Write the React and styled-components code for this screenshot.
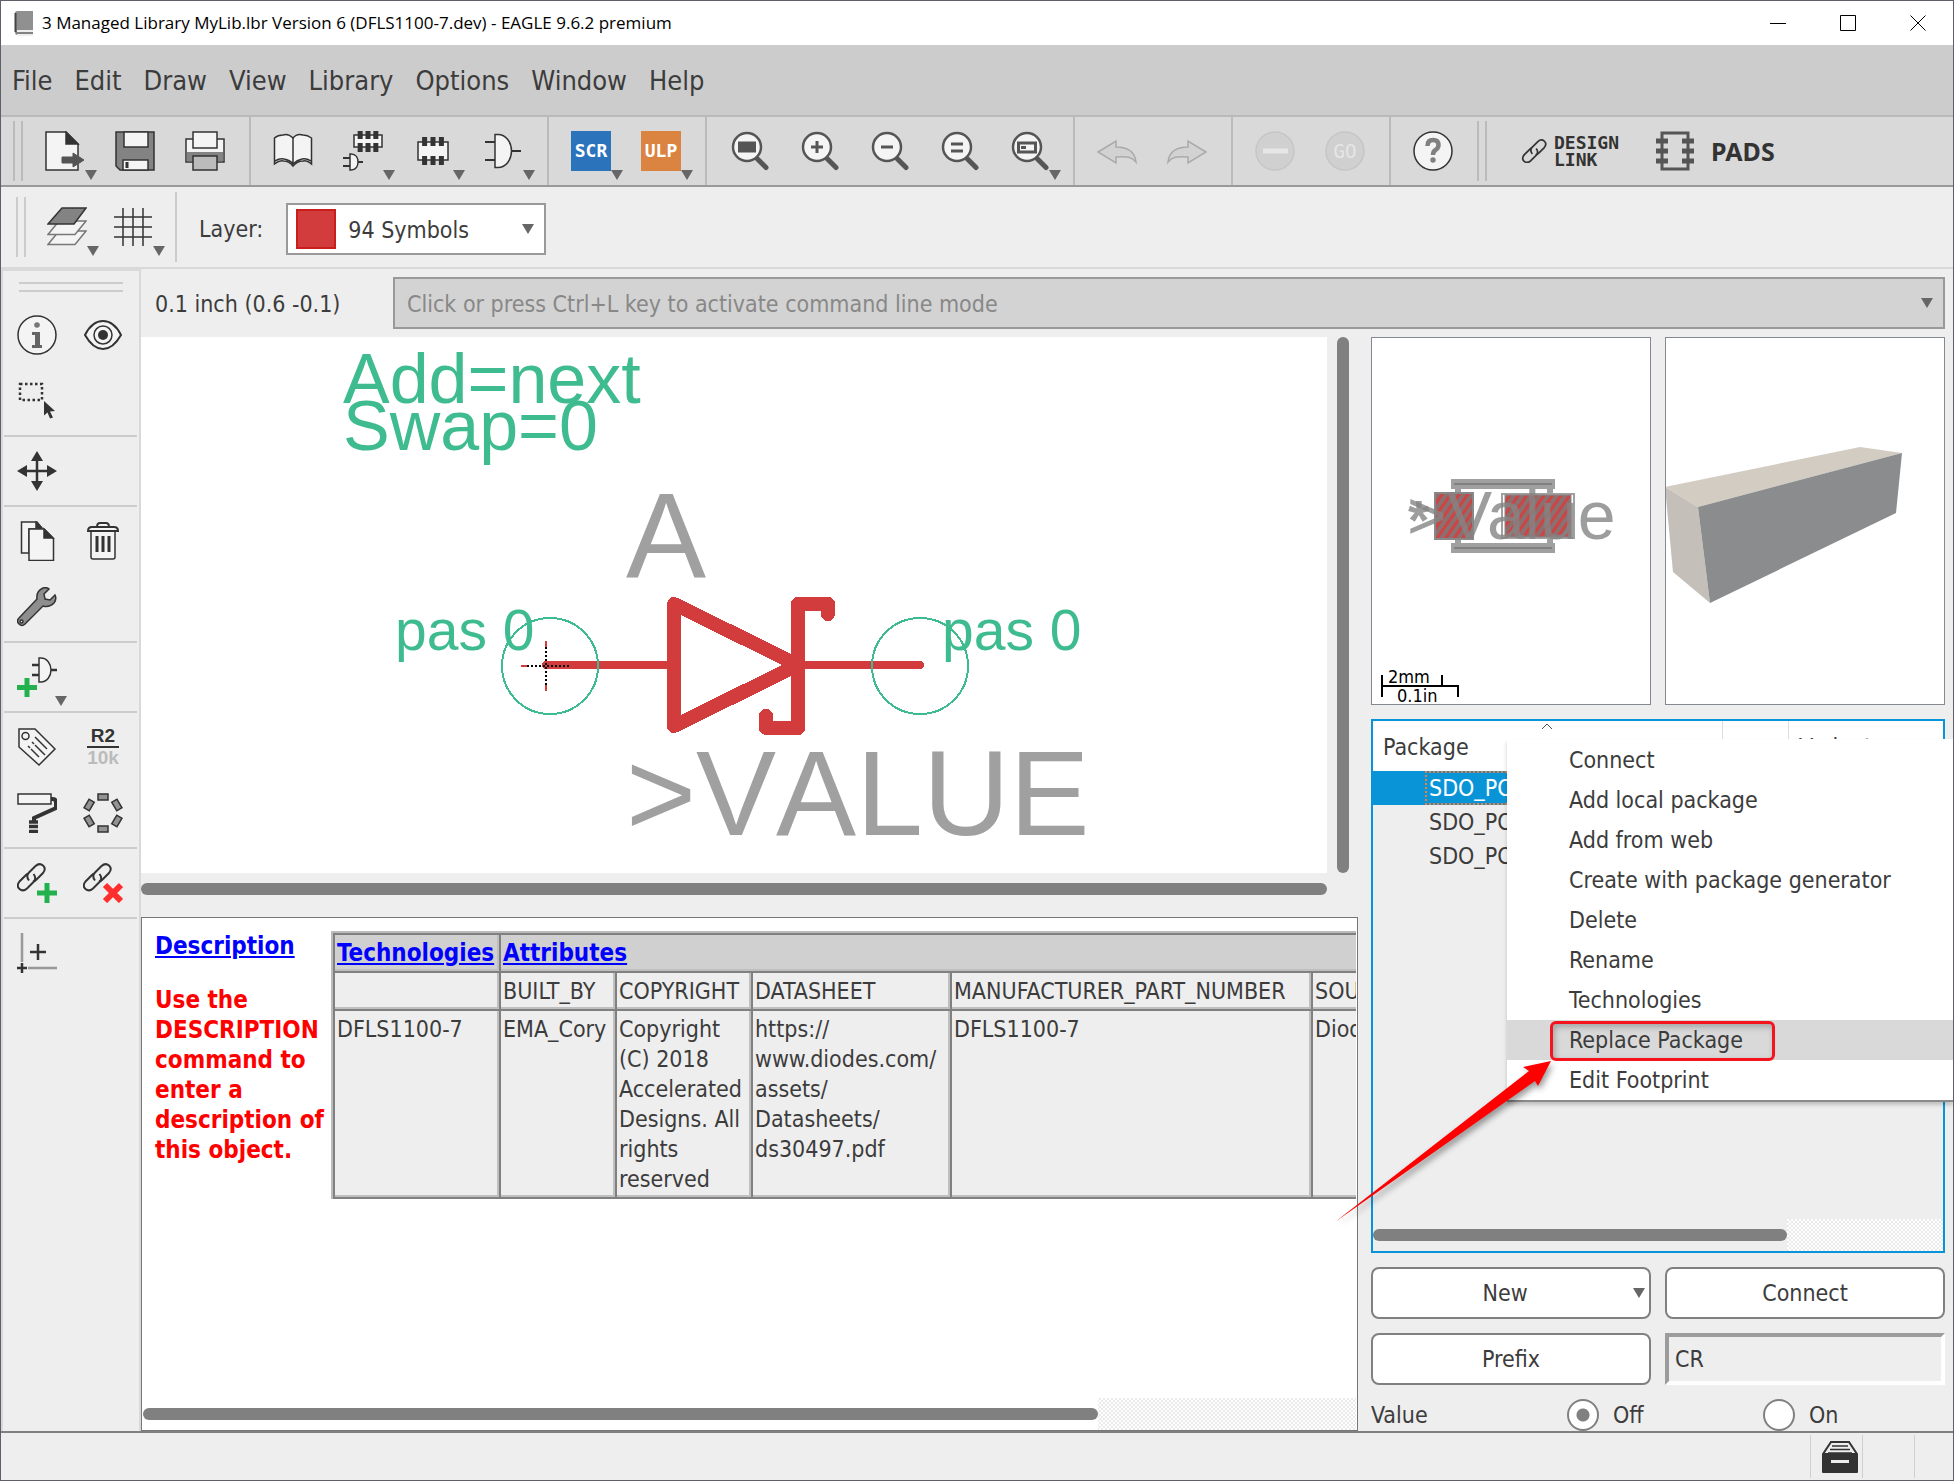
import React, { useState } from "react";
import styled, { createGlobalStyle, css } from "styled-components";

const GlobalStyle = createGlobalStyle`
  *, *::before, *::after { box-sizing: border-box; }
  body { margin: 0; background: #eeeeee; }
  button, input, select { font: inherit; color: inherit; }
`;

const ink = "#333333";
const line = "#808080";
const paper = "#f4f4f4";

/* ---------- shared parts ---------- */

const Caret = styled.span`
  display: block;
  width: 0;
  height: 0;
  border-left: 6px solid transparent;
  border-right: 6px solid transparent;
  border-top: 10px solid #666666;
`;

const Thumb = styled.div`
  background: ${line};
  border-radius: 6px;
  ${(p) => (p.$vertical ? "width: 12px; height: 100%;" : "height: 12px; width: 100%;")}
`;

const hatch = css`
  background: repeating-conic-gradient(#ffffff 0 25%, #eaeaea 0 50%) 0 0 / 4px 4px;
`;

/* ---------- window frame ---------- */

const Window = styled.div`
  font-family: "DejaVu Sans Condensed", "DejaVu Sans", "Noto Sans", sans-serif;
  font-size: 23px;
  line-height: 30px;
  color: #3c3c3c;
  background: #eeeeee;
  min-height: 100vh;
  min-width: 1200px;
  border: 1px solid #5d606b;
  display: flex;
  flex-direction: column;
  overflow: hidden;
`;

const TitleBar = styled.header`
  height: 44px;
  background: #ffffff;
  color: #000000;
  display: flex;
  align-items: center;
  padding-left: 13px;
  gap: 8px;
  font-family: "Open Sans", "Noto Sans", sans-serif;
  font-size: 17px;
`;

const TitleText = styled.h1`
  font: inherit;
  margin: 0;
  flex: 1;
`;

const WindowControls = styled.div`
  display: flex;
`;

const WindowButton = styled.button`
  width: 70px;
  height: 44px;
  border: 0;
  padding: 0;
  background: transparent;
  display: grid;
  place-items: center;
`;

const MenuBar = styled.nav`
  height: 72px;
  background: #cccccc;
  border-bottom: 2px solid #b9b9b9;
  display: flex;
  align-items: center;
  padding-top: 2px;
  font-size: 27px;
`;

const MenuItem = styled.button`
  border: 0;
  background: transparent;
  padding: 0 11px;
`;

/* ---------- toolbars ---------- */

const MainToolbar = styled.div`
  height: 70px;
  background: #d9d9d9;
  border-bottom: 2px solid #999999;
  display: flex;
  align-items: center;
  padding-left: 12px;
`;

const Grip = styled.div`
  width: 10px;
  height: 60px;
  border: solid ${(p) => p.$tone || "#bbbbbb"};
  border-width: 0 2px;
`;

const ToolGroup = styled.div`
  display: flex;
  align-self: stretch;
  align-items: center;
  padding: 0 9px 0 7px;
  border-right: ${(p) => (p.$last ? "0" : "2px solid #bbbbbb")};
`;

const ToolButton = styled.button`
  position: relative;
  width: ${(p) => p.$width || 70}px;
  height: 66px;
  border: 0;
  padding: 0;
  background: transparent;
  display: grid;
  place-items: center;

  ${Caret} {
    position: absolute;
    right: ${(p) => p.$caretRight || 3}px;
    bottom: 4px;
  }
`;

const Badge = styled.span`
  width: 40px;
  height: 40px;
  display: grid;
  place-items: center;
  background: ${(p) => p.$color};
  color: #ffffff;
  font: bold 18px/20px "DejaVu Sans Mono", monospace;
`;

const LinkButton = styled.button`
  border: 0;
  padding: 0;
  background: transparent;
  display: flex;
  align-items: center;
  gap: ${(p) => p.$gap}px;
  margin-left: ${(p) => p.$indent}px;
  text-align: left;
  color: #333333;
  font: ${(p) => (p.$large ? 'bold 25px/30px "Noto Sans", sans-serif' : 'bold 18px/17px "DejaVu Sans Mono", monospace')};
`;

const LayerToolbar = styled.div`
  height: 82px;
  border-bottom: 2px solid #d9d9d9;
  display: flex;
  align-items: center;
  padding-left: 15px;
`;

const LayerGroup = styled.div`
  display: flex;
  align-items: center;
  height: 70px;
  padding: 0 9px 0 8px;
  border-right: 2px solid #cccccc;
`;

const LayerField = styled.div`
  display: flex;
  align-items: center;
  gap: 23px;
  padding: 4px 0 0 22px;
`;

const LayerPicker = styled.div`
  width: 260px;
  height: 52px;
  border: 2px solid #999999;
  background: #ffffff;
  display: flex;
  align-items: center;
  padding: 0 10px 0 8px;
  gap: 12px;
`;

const Swatch = styled.span`
  width: 40px;
  height: 40px;
  background: #d23c3c;
  border: 2px solid #c81e1e;
`;

const LayerSelect = styled.select`
  appearance: none;
  border: 0;
  background: transparent;
  flex: 1;
  min-width: 0;
  padding: 2px 0 0;
  outline: 0;
`;

/* ---------- body ---------- */

const Body = styled.div`
  flex: 1;
  display: flex;
`;

const Palette = styled.aside`
  width: 140px;
  border: 2px solid #d9d9d9;
  border-bottom: 0;
  padding-top: 11px;
`;

const PaletteGrip = styled.div`
  height: 10px;
  margin: 0 16px 9px 16px;
  border: solid #cccccc;
  border-width: 2px 0;
`;

const PaletteGroup = styled.div`
  display: grid;
  grid-template-columns: 66px 66px;
  padding: 1px 0;
  margin: 0 2px 0 1px;
  border-top: ${(p) => (p.$first ? "0" : "2px solid #cccccc")};
`;

const ValueGlyph = styled.span`
  display: grid;
  font: bold 19px/20px "Liberation Sans", Arial, sans-serif;
  color: ${ink};

  b + b {
    color: #bbbbbb;
    border-top: 2px solid ${ink};
  }
`;

const Work = styled.main`
  flex: 1;
  min-width: 0;
  display: flex;
  flex-direction: column;
`;

const CommandRow = styled.div`
  height: 68px;
  display: flex;
  align-items: center;
  padding: 0 8px 0 14px;
`;

const Position = styled.output`
  width: 238px;
  padding-top: 2px;
  white-space: nowrap;
`;

const CommandBox = styled.div`
  flex: 1;
  height: 52px;
  border: 2px solid #999999;
  background: #d3d3d3;
  display: flex;
  align-items: center;
  padding: 0 10px 0 12px;
`;

const CommandInput = styled.input`
  flex: 1;
  min-width: 0;
  border: 0;
  padding: 2px 0 0;
  outline: 0;
  background: transparent;

  &::placeholder { color: #888888; opacity: 1; }
`;

const Panels = styled.div`
  flex: 1;
  display: grid;
  grid-template-columns: minmax(0, 1fr) 574px;
  gap: 13px;
  padding-right: 8px;
`;

const Editor = styled.section`
  display: flex;
  flex-direction: column;
  min-width: 0;
`;

const CanvasGrid = styled.div`
  display: grid;
  grid-template-columns: minmax(0, 1fr) 31px;
  margin-bottom: 12px;
`;

const Canvas = styled.div`
  height: 536px;
  background: #ffffff;
  overflow: hidden;
`;

const SymbolSvg = styled.svg`
  display: block;
  font-family: "Liberation Sans", Arial, sans-serif;
  font-kerning: none;
`;

const Track = styled.div`
  padding: ${(p) => (p.$vertical ? "0 10px" : "10px 0")};
`;

const Info = styled.section`
  flex: 1;
  background: #ffffff;
  border: 1px solid #777777;
  padding: 0 1px;
  display: flex;
  flex-direction: column;
`;

const InfoContent = styled.div`
  flex: 1;
  display: flex;
  padding: 13px 0 0 12px;
  overflow: hidden;
`;

const Summary = styled.div`
  flex: none;
  width: 176px;
  font-size: 24px;
  font-weight: bold;
`;

const DocLink = styled.a`
  color: #0000ff;
  font-size: 24px;
  font-weight: bold;
`;

const Warning = styled.p`
  margin: 24px 0 0;
  color: #ff0000;
`;

const AttributeTable = styled.table`
  flex: none;
  table-layout: fixed;
  width: 1099px;
  align-self: flex-start;
  border-collapse: separate;
  border-spacing: 0;
  border: solid #bbbbbb;
  border-width: 2px 0 0 2px;
`;

const Cell = styled.td`
  padding: 3px 2px;
  height: 38px;
  text-align: left;
  vertical-align: top;
  font-weight: ${(p) => (p.$head ? "bold" : "normal")};
  background: ${(p) => (p.$head ? "#d0d0d0" : "#eeeeee")};
  border: solid ${line};
  border-width: ${(p) => (p.$bottom ? "2px 0 2px 2px" : "2px 0 0 2px")};
  box-shadow: inset -2px -2px #bfbfbf;
`;

const InfoTrack = styled.div`
  height: 32px;
  display: flex;
  ${hatch}
`;

const ListTrack = styled(InfoTrack)`
  margin-top: auto;
`;

const TrackFill = styled.div`
  width: ${(p) => p.$size};
  background: ${(p) => p.$tone};
  display: flex;
  align-items: center;
`;

/* ---------- right side ---------- */

const Side = styled.section`
  display: flex;
  flex-direction: column;
  gap: 14px;
`;

const Pair = styled.div`
  display: grid;
  grid-template-columns: 1fr 1fr;
  gap: 14px;
`;

const Preview = styled.div`
  height: 368px;
  background: #ffffff;
  border: 1px solid #858992;
  overflow: hidden;
`;

const PackageBox = styled.div`
  position: relative;
  flex: 1;
  border: 2px solid #0a94d8;
  display: flex;
  flex-direction: column;
`;

const PackageHeader = styled.div`
  position: relative;
  height: 50px;
  background: #ffffff;
  display: grid;
  grid-template-columns: 350px 66px 1fr;
`;

const HeaderCell = styled.div`
  padding: 11px 10px 0;
  border-right: ${(p) => (p.$last ? "0" : "1px solid #dddddd")};
`;

const SortMark = styled.svg`
  position: absolute;
  left: 168px;
  top: 2px;
`;

const Packages = styled.ul`
  list-style: none;
  margin: 0;
  padding: 0;
`;

const PackageRow = styled.li`
  height: 34px;
  padding-left: 52px;
  background: ${(p) => (p.$selected ? "#0a94d8" : "transparent")};
  color: ${(p) => (p.$selected ? "#ffffff" : "inherit")};
`;

const RowText = styled.span`
  display: block;
  height: 34px;
  line-height: 30px;
  padding-left: 2px;
  border: 2px dotted ${(p) => (p.$selected ? "#ff7a30" : "transparent")};
`;

const ContextMenu = styled.div`
  position: absolute;
  left: 134px;
  right: -10px;
  top: 18px;
  padding-top: 1px;
  background: #ffffff;
  border-bottom: 2px solid #8a8a8a;
  box-shadow: 0 3px 4px rgba(0, 0, 0, 0.2);
`;

const ContextItem = styled.button`
  position: relative;
  display: block;
  width: 100%;
  height: 40px;
  border: 0;
  padding: 0 0 0 62px;
  text-align: left;
  background: ${(p) => (p.$active ? "#d9d9d9" : "transparent")};
`;

const Callout = styled.span`
  position: absolute;
  left: 43px;
  top: 1px;
  width: 225px;
  height: 40px;
  border: 3px solid #f5141e;
  border-radius: 6px;
  box-shadow: inset 2px 3px 6px rgba(0, 0, 0, 0.25);
`;

const CalloutArrow = styled.svg`
  position: absolute;
  left: -174px;
  top: 37px;
  overflow: visible;
  pointer-events: none;
  filter: drop-shadow(2px 4px 3px rgba(0, 0, 0, 0.4));
`;

const PushButton = styled.button`
  height: 52px;
  border: 2px solid ${line};
  border-radius: 8px;
  background: #ffffff;
  padding: 0 4px;
  display: flex;
  align-items: center;
`;

const PushText = styled.span`
  flex: 1;
  text-align: center;
`;

const PrefixInput = styled.input`
  width: 100%;
  min-width: 0;
  height: 52px;
  border: 4px solid;
  border-color: #9c9c9c #ffffff #ffffff #9c9c9c;
  background: #eeeeee;
  padding: 0 6px;
  outline: 0;
`;

const ValueRow = styled.fieldset`
  border: 0;
  margin: 0;
  padding: 0;
  display: grid;
  grid-template-columns: 196px 196px 1fr;
  align-items: center;
  height: 32px;
`;

const Choice = styled.label`
  display: flex;
  align-items: center;
  gap: 14px;
`;

const Radio = styled.input`
  appearance: none;
  width: 32px;
  height: 32px;
  margin: 0;
  border: 2px solid ${line};
  border-radius: 50%;
  background: #ffffff;

  &:checked { background: radial-gradient(circle, ${line} 0 6px, #ffffff 7px); }
`;

/* ---------- status bar ---------- */

const StatusBar = styled.footer`
  height: 49px;
  border-top: 2px solid ${line};
  display: flex;
  justify-content: flex-end;
  padding: 2px 0;
`;

const StatusCell = styled.div`
  width: ${(p) => p.$width}px;
  border-left: 1px solid #cfcfcf;
  display: flex;
  align-items: center;
  padding-left: 11px;
`;

/* ---------- icons ---------- */

const Icon = ({ children, size = 40 }) => (
  <svg width={size} height={size} viewBox="0 0 40 40" fill={paper} stroke={ink} strokeWidth="1.5" aria-hidden="true">
    {children}
  </svg>
);

const gateShape = <path d="M12 3.500h3c8 0 13.500 8 13.500 16.500S23 36.500 15 36.500h-3z" />;

const Chip = ({ x = 5, y = 11, w = 30, h = 18 }) => (
  <g>
    <rect x={x} y={y} width={w} height={h} />
    {[0.22, 0.5, 0.78].map((f) => (
      <path key={f} d={`M${x + w * f} ${y - 5}v9M${x + w * f} ${y + h - 4}v9`} strokeWidth="5" />
    ))}
  </g>
);

const Lens = ({ children }) => (
  <Icon>
    <circle cx="18" cy="16" r="14" stroke="#555" strokeWidth="2.500" />
    <path d="M28.500 28l8.500 8.500" stroke="#555" strokeWidth="5" strokeLinecap="round" />
    <g stroke="#555" strokeWidth="3" fill="none">{children}</g>
  </Icon>
);

/* Two interlocked links; each is left open where the other passes over it. */
const ChainMark = () => (
  <g fill="none" strokeWidth="2">
    <path d="M12 17.500Q8.500 13 12 9.500l6.500-6.500Q22.500-.5 26 2.500T26 10l-6.500 6.500q-1.500 1.500-3.500 2" />
    <path d="M16.500 11q3.500 4.500 0 8L10 25.500Q6 29 2.500 26T2.500 18.500L9 12q1-1 2-1.300" />
  </g>
);

const icons = {
  script: (
    <Icon>
      <path d="M1 1h20l12 12v26H1z" />
      <path d="M21 1l12 12H21z" fill={ink} />
      <path d="M17 26h11v-4l11 7-11 7v-4H17z" fill="#555" stroke="#555" strokeWidth="1" />
    </Icon>
  ),
  save: (
    <Icon>
      <path d="M1 1h38v38H5l-4-4z" fill="#838383" />
      <path d="M9 1h24v15H9z" />
      <path d="M8 39V29h25v10z" />
      <path d="M12 31v6" strokeWidth="3" />
    </Icon>
  ),
  print: (
    <Icon>
      <path d="M1 8h38v23H1z" />
      <path d="M2 21h36v9H2z" fill="#838383" stroke="none" />
      <path d="M8 1h24v16H8z" />
      <path d="M8 25h24v14H8z" fill="#bbbbbb" />
    </Icon>
  ),
  book: (
    <Icon>
      <path d="M20 7q-5-5-10-3-5 0-8.500 3v26q5-4 9-3 6 0 9.500 5 4-5 10-5 4-1 8.500 3V7q-4-3-8.500-3-6-2-10 3z" />
      <path d="M20 7v27M2 30q5-3 9-2 6 1 9 5 4-4 9-5 4-1 9 2" fill="none" />
    </Icon>
  ),
  device: (
    <Icon>
      <g transform="translate(10 -1)"><Chip x={1} y={5} w={28} h={12} /></g>
      <path d="M7 23h1c5 0 7 4 7 8s-2 8-7 8H7z" />
      <path d="M0 27h7M0 35h7M15 31h5" strokeWidth="2" />
    </Icon>
  ),
  chip: <Icon><Chip /></Icon>,
  gate: (
    <Icon>
      {gateShape}
      <path d="M2 11h10M2 29h10M28 20h10" strokeWidth="2" />
    </Icon>
  ),
  fit: <Lens><rect x="10.500" y="12" width="15" height="8" fill="#555" /></Lens>,
  zoomIn: <Lens><path d="M12 16h12M18 10v12" /></Lens>,
  zoomOut: <Lens><path d="M12 16h12" /></Lens>,
  redraw: <Lens><path d="M12 13h12M12 20h12" /></Lens>,
  area: <Lens><rect x="9.500" y="12" width="17" height="9" /><path d="M12 16.500h5" /></Lens>,
  undo: <Icon><path d="M1 21L19 10v6c13 0 19 6 20 15-4-5-9-6-20-5v6z" fill="#d2d2d2" stroke="#aaa" /></Icon>,
  redo: <Icon><path d="M39 21L21 10v6C8 16 2 22 1 31c4-5 9-6 20-5v6z" fill="#d2d2d2" stroke="#aaa" /></Icon>,
  stop: (
    <Icon>
      <circle cx="20" cy="20" r="19" fill="#d0d0d0" stroke="#c6c6c6" />
      <path d="M8 20h25" stroke="#e6e6e6" strokeWidth="5" />
    </Icon>
  ),
  go: (
    <Icon>
      <circle cx="20" cy="20" r="19" fill="#d0d0d0" stroke="#c6c6c6" />
      <text x="20" y="27" textAnchor="middle" fill="#e6e6e6" stroke="none" fontFamily="DejaVu Sans Mono, monospace" fontSize="19">GO</text>
    </Icon>
  ),
  help: (
    <Icon>
      <circle cx="20" cy="20" r="19" />
      <path d="M14.500 15q0-6 5.500-6t5.500 5q0 3-3 5-2.500 1.500-2.500 5" fill="none" stroke="#808080" strokeWidth="4.500" />
      <circle cx="20" cy="29" r="2.700" fill="#808080" stroke="none" />
    </Icon>
  ),
  layers: (
    <Icon>
      <path d="M1 37.500L12 24h27L28 37.500z" stroke="#777" />
      <path d="M1 27.500L12 14h27L28 27.500z" stroke="#777" />
      <path d="M1 17L15 1h24L27 17z" fill="#838383" />
    </Icon>
  ),
  grid: <Icon><path d="M10 1v38M20 1v38M30 1v38M1 10h38M1 20h38M1 30h38" strokeWidth="1.500" /></Icon>,
  info: (
    <Icon>
      <circle cx="20" cy="20" r="19" />
      <circle cx="20" cy="10" r="2.800" fill="#777" stroke="none" />
      <path d="M15 17h8v13h2v3H15v-3h3V20h-3z" fill="#666" stroke="none" />
    </Icon>
  ),
  eye: (
    <Icon>
      <path d="M2 20Q9 6 20 6t18 14q-8 14-18 14T2 20z" strokeWidth="2" />
      <circle cx="20" cy="20" r="9" />
      <circle cx="20" cy="20" r="5" fill={ink} stroke="none" />
    </Icon>
  ),
  select: (
    <Icon>
      <path d="M3 3h22v16H3z" fill="none" strokeWidth="2.500" strokeDasharray="2.500 2.500" />
      <path d="M27 20l11 10-5 .5 3 6-3 1-2.500-6-3.500 3z" fill={ink} stroke="none" />
    </Icon>
  ),
  move: (
    <Icon>
      <path d="M20 5v30M5 20h30" strokeWidth="2.500" />
      <path d="M20 0l6 10H14zM20 40l6-10H14zM0 20l10-6v12zM40 20l-10-6v12z" fill={ink} stroke="none" />
    </Icon>
  ),
  copy: (
    <Icon>
      <path d="M10 32H4.500V1H20l4 5v2H12v24z" />
      <path d="M19 1l6 6h-6z" fill={ink} />
      <path d="M12 8h15l9.500 9.500V39.500H12z" />
      <path d="M27 8l9 9h-9z" fill={ink} />
    </Icon>
  ),
  trash: (
    <Icon>
      <path d="M8 10h24v26q0 2-2 2H10q-2 0-2-2z" />
      <path d="M14 6q0-4 3-4h6q3 0 3 4M5 10q0-4 4-4h22q4 0 4 4z" strokeWidth="2" />
      <path d="M14 15v16M20 15v16M26 15v16" strokeWidth="3" />
    </Icon>
  ),
  wrench: (
    <Icon>
      <path d="M20 12q-1-8 6-11 4-1 6 1l-5 5 1 5 5 1 5-5q2 4-1 8-5 5-11 3L8 37q-3 3-6 0t0-6z" fill="#8e8e8e" />
      <circle cx="4.500" cy="34.500" r="1.500" />
    </Icon>
  ),
  addGate: (
    <Icon>
      <path d="M22 1h2c6 0 10 6 10 12s-4 12-10 12h-2z" />
      <path d="M15 8h7M15 18h7M34 13h6" strokeWidth="2.500" />
      <path d="M10 21v19M0 30.500h20" stroke="#22b14c" strokeWidth="5" />
    </Icon>
  ),
  tag: (
    <Icon>
      <path d="M2 2h16l20 20-16 16L2 20z" />
      <circle cx="8.500" cy="9" r="3.500" />
      <path d="M18 10l12 12M15 15l2 2M18 18l10 10M11 19l2 2M14 22l8 8" />
    </Icon>
  ),
  roller: (
    <Icon>
      <path d="M33 6h3q3 0 3 4v5L17 25v4" fill="none" strokeWidth="4" />
      <rect x="1" y="1" width="33" height="10" />
      <path d="M12 29h9M12 33.500h9M12 38.500h9" strokeWidth="3.500" />
    </Icon>
  ),
  ring: (
    <Icon>
      {[0, 60, 120, 180, 240, 300].map((a) => (
        <rect key={a} x="15" y="1" width="10" height="6" fill="#939393" transform={`rotate(${a} 20 20)`} />
      ))}
    </Icon>
  ),
  linkAdd: <Icon><ChainMark /><path d="M30 20v20M20 30h20" stroke="#22b14c" strokeWidth="5" /></Icon>,
  linkRemove: <Icon><ChainMark /><path d="M22 22l16 16M38 22L22 38" stroke="#ff2e2e" strokeWidth="6" /></Icon>,
  origin: (
    <Icon>
      <path d="M5 0v29M11 35h29" stroke="#999" strokeWidth="2.500" />
      <path d="M5 30v10M0 35h10M21 11v16M13 19h16" strokeWidth="2.500" />
    </Icon>
  ),
};

const Tool = ({ name, label, caret, ...rest }) => (
  <ToolButton type="button" aria-label={label} {...rest}>
    {icons[name]}
    {caret && <Caret />}
  </ToolButton>
);

/* ---------- drawings ---------- */

const SymbolDrawing = () => {
  const green = "#3fbb90";
  const grey = "#a0a0a0";
  const red = "#d23c3c";
  return (
    <SymbolSvg width="1186" height="536" viewBox="0 0 1186 536">
      <g fill={green} fontSize="70">
        <text x="202" y="66">Add=next</text>
        <text x="202" y="113">Swap=0</text>
      </g>
      <g fill={grey} fontSize="120">
        <text x="485" y="240">A</text>
        <text x="485" y="498">&gt;VALUE</text>
      </g>
      <g fill={green} fontSize="57">
        <text x="254" y="313">pas 0</text>
        <text x="801" y="313">pas 0</text>
      </g>
      <g shapeRendering="crispEdges" fill="none">
        <path d="M405 328H533M664 328H779" stroke={red} strokeWidth="8" strokeLinecap="round" />
        <path d="M533 267V389L657 328z" stroke={red} strokeWidth="14" strokeLinejoin="round" />
        <path d="M687 277V267H657V391H625V379" stroke={red} strokeWidth="14" strokeLinejoin="round" strokeLinecap="round" />
        <g stroke={green} strokeWidth="2">
          <circle cx="409" cy="329" r="48" />
          <circle cx="779" cy="329" r="48" />
        </g>
        <path d="M380 329h6M405 304v6M405 348v6" stroke={red} strokeWidth="2" />
        <path d="M386 329h42M405 310v38" stroke="#000" strokeWidth="2" strokeDasharray="2 2" />
      </g>
    </SymbolSvg>
  );
};

const FootprintDrawing = () => (
  <svg width="280" height="367" viewBox="1 1 280 367">
    <defs>
      <pattern id="padFill" width="7" height="7" patternUnits="userSpaceOnUse" patternTransform="rotate(35)">
        <rect width="7" height="7" fill="#8a7070" />
        <rect width="3" height="7" fill="#cc4444" />
      </pattern>
    </defs>
    <g fill="none" stroke="#a0a0a0" shapeRendering="crispEdges">
      <path d="M80 147H184M80 211H184" strokeWidth="10" />
      <path d="M87 150V208M179 150V208" strokeWidth="6" />
      <path d="M83 147H181M83 211H181" stroke="#808080" strokeWidth="2" />
      <rect x="131" y="157" width="72" height="44" strokeWidth="2" fill="#fff" />
    </g>
    <rect x="64" y="156" width="38" height="46" fill="url(#padFill)" stroke="#888" strokeWidth="2" />
    <rect x="134" y="158" width="66" height="42" fill="url(#padFill)" stroke="#888" />
    <g fill="#858585" fillOpacity="0.8" fontFamily="Liberation Sans, Arial, sans-serif">
      <text x="37" y="202" fontSize="55" fontWeight="bold">*</text>
      <text x="36" y="202" fontSize="68">&gt;Value</text>
    </g>
    <path d="M11 338v22M10 349h78M71 338v11M87 349v11" stroke="#000" strokeWidth="2" fill="none" />
    <g fontFamily="DejaVu Sans Condensed, DejaVu Sans, sans-serif" fontSize="18">
      <text x="17" y="346">2mm</text>
      <text x="26" y="365">0.1in</text>
    </g>
  </svg>
);

const BodyDrawing = () => (
  <svg width="278" height="367" viewBox="1 1 278 367">
    <path d="M0 150L195 110 237 116 33 170z" fill="#d3ccc3" />
    <path d="M0 150L33 170 45 266 8 235z" fill="#c4c0b9" />
    <path d="M33 170L237 116 231 176 45 266z" fill="#8a8c8d" />
  </svg>
);

/* ---------- page ---------- */

const menus = ["File", "Edit", "Draw", "View", "Library", "Options", "Window", "Help"];
const actions = [
  "Connect", "Add local package", "Add from web", "Create with package generator",
  "Delete", "Rename", "Technologies", "Replace Package", "Edit Footprint",
];
const columns = [166, 116, 136, 199, 361, 119];
const palette = [
  [["info", "Info"], ["eye", "Show"], ["select", "Select"]],
  [["move", "Move"]],
  [["copy", "Copy"], ["trash", "Delete"], ["wrench", "Change"]],
  [["addGate", "Add", true]],
  [["tag", "Attribute"], ["value", "Value"], ["roller", "Paint"], ["ring", "Arrange"]],
  [["linkAdd", "Connect"], ["linkRemove", "Disconnect"]],
  [["origin", "Origin"]],
];

export default function App() {
  const [value, setValue] = useState("off");
  const [prefix, setPrefix] = useState("CR");

  return (
    <>
      <GlobalStyle />
      <Window>
        <TitleBar>
          <svg width="20" height="26" viewBox="0 0 20 26" aria-hidden="true">
            <path d="M3 1h16v24H3q-2 0-2-3V3q0-2 2-2z" fill="#909090" />
            <path d="M1.500 3v19" stroke="#444" strokeWidth="2" />
            <path d="M3 21h16M3 25h16" stroke="#eee" strokeWidth="2" />
            <path d="M2 23h17" stroke="#777" />
          </svg>
          <TitleText>3 Managed Library MyLib.lbr Version 6 (DFLS1100-7.dev) - EAGLE 9.6.2 premium</TitleText>
          <WindowControls>
            <WindowButton type="button" aria-label="Minimize">
              <svg width="16" height="16" stroke="#000"><path d="M0 8.500h16" /></svg>
            </WindowButton>
            <WindowButton type="button" aria-label="Maximize">
              <svg width="16" height="16" stroke="#000" fill="none"><path d="M.5.5h15v15H.5z" /></svg>
            </WindowButton>
            <WindowButton type="button" aria-label="Close">
              <svg width="16" height="16" stroke="#000"><path d="M.5.5l15 15M15.500.5l-15 15" /></svg>
            </WindowButton>
          </WindowControls>
        </TitleBar>

        <MenuBar>
          {menus.map((m) => <MenuItem key={m} type="button">{m}</MenuItem>)}
        </MenuBar>

        <MainToolbar>
          <Grip />
          <ToolGroup>
            <Tool name="script" label="Open" caret />
            <Tool name="save" label="Save" />
            <Tool name="print" label="Print" />
          </ToolGroup>
          <ToolGroup>
            <Tool name="book" label="Library" />
            <Tool name="device" label="Device" caret />
            <Tool name="chip" label="Package" caret />
            <Tool name="gate" label="Symbol" caret />
          </ToolGroup>
          <ToolGroup>
            <ToolButton type="button"><Badge $color="#2b74bb">SCR</Badge><Caret /></ToolButton>
            <ToolButton type="button"><Badge $color="#db8340">ULP</Badge><Caret /></ToolButton>
          </ToolGroup>
          <ToolGroup>
            <Tool name="fit" label="Fit" />
            <Tool name="zoomIn" label="Zoom in" />
            <Tool name="zoomOut" label="Zoom out" />
            <Tool name="redraw" label="Redraw" />
            <Tool name="area" label="Zoom select" caret />
          </ToolGroup>
          <ToolGroup>
            <Tool name="undo" label="Undo" />
            <Tool name="redo" label="Redo" />
          </ToolGroup>
          <ToolGroup>
            <Tool name="stop" label="Stop" />
            <Tool name="go" label="Go" />
          </ToolGroup>
          <ToolGroup $last>
            <Tool name="help" label="Help" />
          </ToolGroup>
          <Grip />
          <LinkButton type="button" $indent={34} $gap={7}>
            <svg width="26" height="24" viewBox="-1 0 30 28" stroke={ink} aria-hidden="true"><ChainMark /></svg>
            <span>DESIGN<br />LINK</span>
          </LinkButton>
          <LinkButton type="button" $indent={36} $gap={16} $large>
            <svg width="40" height="40" viewBox="0 0 40 40" stroke="#555" aria-hidden="true">
              <path d="M7 2h26v36H7z" fill="#d9d9d9" strokeWidth="3" />
              <path d="M1 10h12M1 20h12M1 30h12M27 10h12M27 20h12M27 30h12" strokeWidth="5" />
            </svg>
            PADS
          </LinkButton>
        </MainToolbar>

        <LayerToolbar>
          <Grip $tone="#cccccc" />
          <LayerGroup>
            <Tool name="layers" label="Layers" caret $width={66} $caretRight={1} />
            <Tool name="grid" label="Grid" caret $width={66} $caretRight={1} />
          </LayerGroup>
          <LayerField>
            <label htmlFor="layer">Layer:</label>
            <LayerPicker>
              <Swatch />
              <LayerSelect id="layer" defaultValue="94">
                <option value="94">94 Symbols</option>
              </LayerSelect>
              <Caret />
            </LayerPicker>
          </LayerField>
        </LayerToolbar>

        <Body>
          <Palette>
            <PaletteGrip />
            {palette.map((group, i) => (
              <PaletteGroup key={i} $first={i === 0}>
                {group.map(([name, label, caret]) =>
                  name === "value" ? (
                    <ToolButton key={name} type="button" $width={66}>
                      <ValueGlyph><b>R2</b><b>10k</b></ValueGlyph>
                    </ToolButton>
                  ) : (
                    <Tool key={name} name={name} label={label} caret={caret} $width={66} />
                  )
                )}
              </PaletteGroup>
            ))}
          </Palette>

          <Work>
            <CommandRow>
              <Position>0.1 inch (0.6 -0.1)</Position>
              <CommandBox>
                <CommandInput aria-label="Command line" placeholder="Click or press Ctrl+L key to activate command line mode" />
                <Caret />
              </CommandBox>
            </CommandRow>

            <Panels>
              <Editor>
                <CanvasGrid>
                  <Canvas><SymbolDrawing /></Canvas>
                  <Track $vertical><Thumb $vertical /></Track>
                  <Track><Thumb /></Track>
                </CanvasGrid>
                <Info>
                  <InfoContent>
                    <Summary>
                      <DocLink href="#description">Description</DocLink>
                      <Warning>Use the DESCRIPTION command to enter a description of this object.</Warning>
                    </Summary>
                    <AttributeTable>
                      <colgroup>{columns.map((w) => <col key={w} width={w} />)}</colgroup>
                      <thead>
                        <tr>
                          <Cell as="th" $head><DocLink href="#technologies">Technologies</DocLink></Cell>
                          <Cell as="th" $head colSpan={5}><DocLink href="#attributes">Attributes</DocLink></Cell>
                        </tr>
                      </thead>
                      <tbody>
                        <tr>
                          <Cell />
                          <Cell>BUILT_BY</Cell>
                          <Cell>COPYRIGHT</Cell>
                          <Cell>DATASHEET</Cell>
                          <Cell>MANUFACTURER_PART_NUMBER</Cell>
                          <Cell>SOURCE</Cell>
                        </tr>
                        <tr>
                          <Cell $bottom>DFLS1100-7</Cell>
                          <Cell $bottom>EMA_Cory</Cell>
                          <Cell $bottom>Copyright (C) 2018 Accelerated Designs. All rights reserved</Cell>
                          <Cell $bottom>https://<wbr />www.diodes.com/<wbr />assets/<wbr />Datasheets/<wbr />ds30497.pdf</Cell>
                          <Cell $bottom>DFLS1100-7</Cell>
                          <Cell $bottom>Diodes</Cell>
                        </tr>
                      </tbody>
                    </AttributeTable>
                  </InfoContent>
                  <InfoTrack>
                    <TrackFill $size="78.7%" $tone="#ffffff"><Thumb /></TrackFill>
                  </InfoTrack>
                </Info>
              </Editor>

              <Side>
                <Pair>
                  <Preview><FootprintDrawing /></Preview>
                  <Preview><BodyDrawing /></Preview>
                </Pair>

                <PackageBox>
                  <PackageHeader>
                    <HeaderCell>Package</HeaderCell>
                    <HeaderCell />
                    <HeaderCell $last>Variant</HeaderCell>
                    <SortMark width="12" height="8" fill="none" stroke="#555"><path d="M1 6l5-5 5 5" /></SortMark>
                  </PackageHeader>
                  <Packages>
                    {[0, 1, 2].map((i) => (
                      <PackageRow key={i} $selected={i === 0}>
                        <RowText $selected={i === 0}>SDO_PO</RowText>
                      </PackageRow>
                    ))}
                  </Packages>
                  <ListTrack>
                    <TrackFill $size="414px" $tone="#eeeeee"><Thumb /></TrackFill>
                  </ListTrack>
                  <ContextMenu>
                    {actions.map((a) => {
                      const active = a === "Replace Package";
                      return (
                        <ContextItem key={a} type="button" $active={active}>
                          {active && <Callout />}
                          {a}
                          {active && (
                            <CalloutArrow width="220" height="170">
                              <path d="M218 4L190 10 196 14 2 165 202 24 205 29z" fill="#ff0000" />
                            </CalloutArrow>
                          )}
                        </ContextItem>
                      );
                    })}
                  </ContextMenu>
                </PackageBox>

                <Pair>
                  <PushButton type="button"><PushText>New</PushText><Caret /></PushButton>
                  <PushButton type="button"><PushText>Connect</PushText></PushButton>
                  <PushButton type="button"><PushText>Prefix</PushText></PushButton>
                  <PrefixInput aria-label="Prefix" value={prefix} onChange={(e) => setPrefix(e.target.value)} />
                </Pair>

                <ValueRow>
                  <span>Value</span>
                  <Choice>
                    <Radio type="radio" name="value" checked={value === "off"} onChange={() => setValue("off")} />
                    Off
                  </Choice>
                  <Choice>
                    <Radio type="radio" name="value" checked={value === "on"} onChange={() => setValue("on")} />
                    On
                  </Choice>
                </ValueRow>
              </Side>
            </Panels>
          </Work>
        </Body>

        <StatusBar>
          <StatusCell $width={52}>
            <svg width="36" height="32" viewBox="0 0 36 32" aria-hidden="true">
              <path d="M1 13L9 1h18l8 12z" fill="#eee" stroke={ink} strokeWidth="2" />
              <path d="M10 5h16M8 8.500h20M6 12h24" stroke={ink} strokeWidth="1.500" />
              <rect y="13" width="36" height="19" rx="1" fill={ink} />
              <path d="M9 20.500h18" stroke="#eee" strokeWidth="3" />
            </svg>
          </StatusCell>
          <StatusCell $width={52} />
          <StatusCell $width={39} />
        </StatusBar>
      </Window>
    </>
  );
}
